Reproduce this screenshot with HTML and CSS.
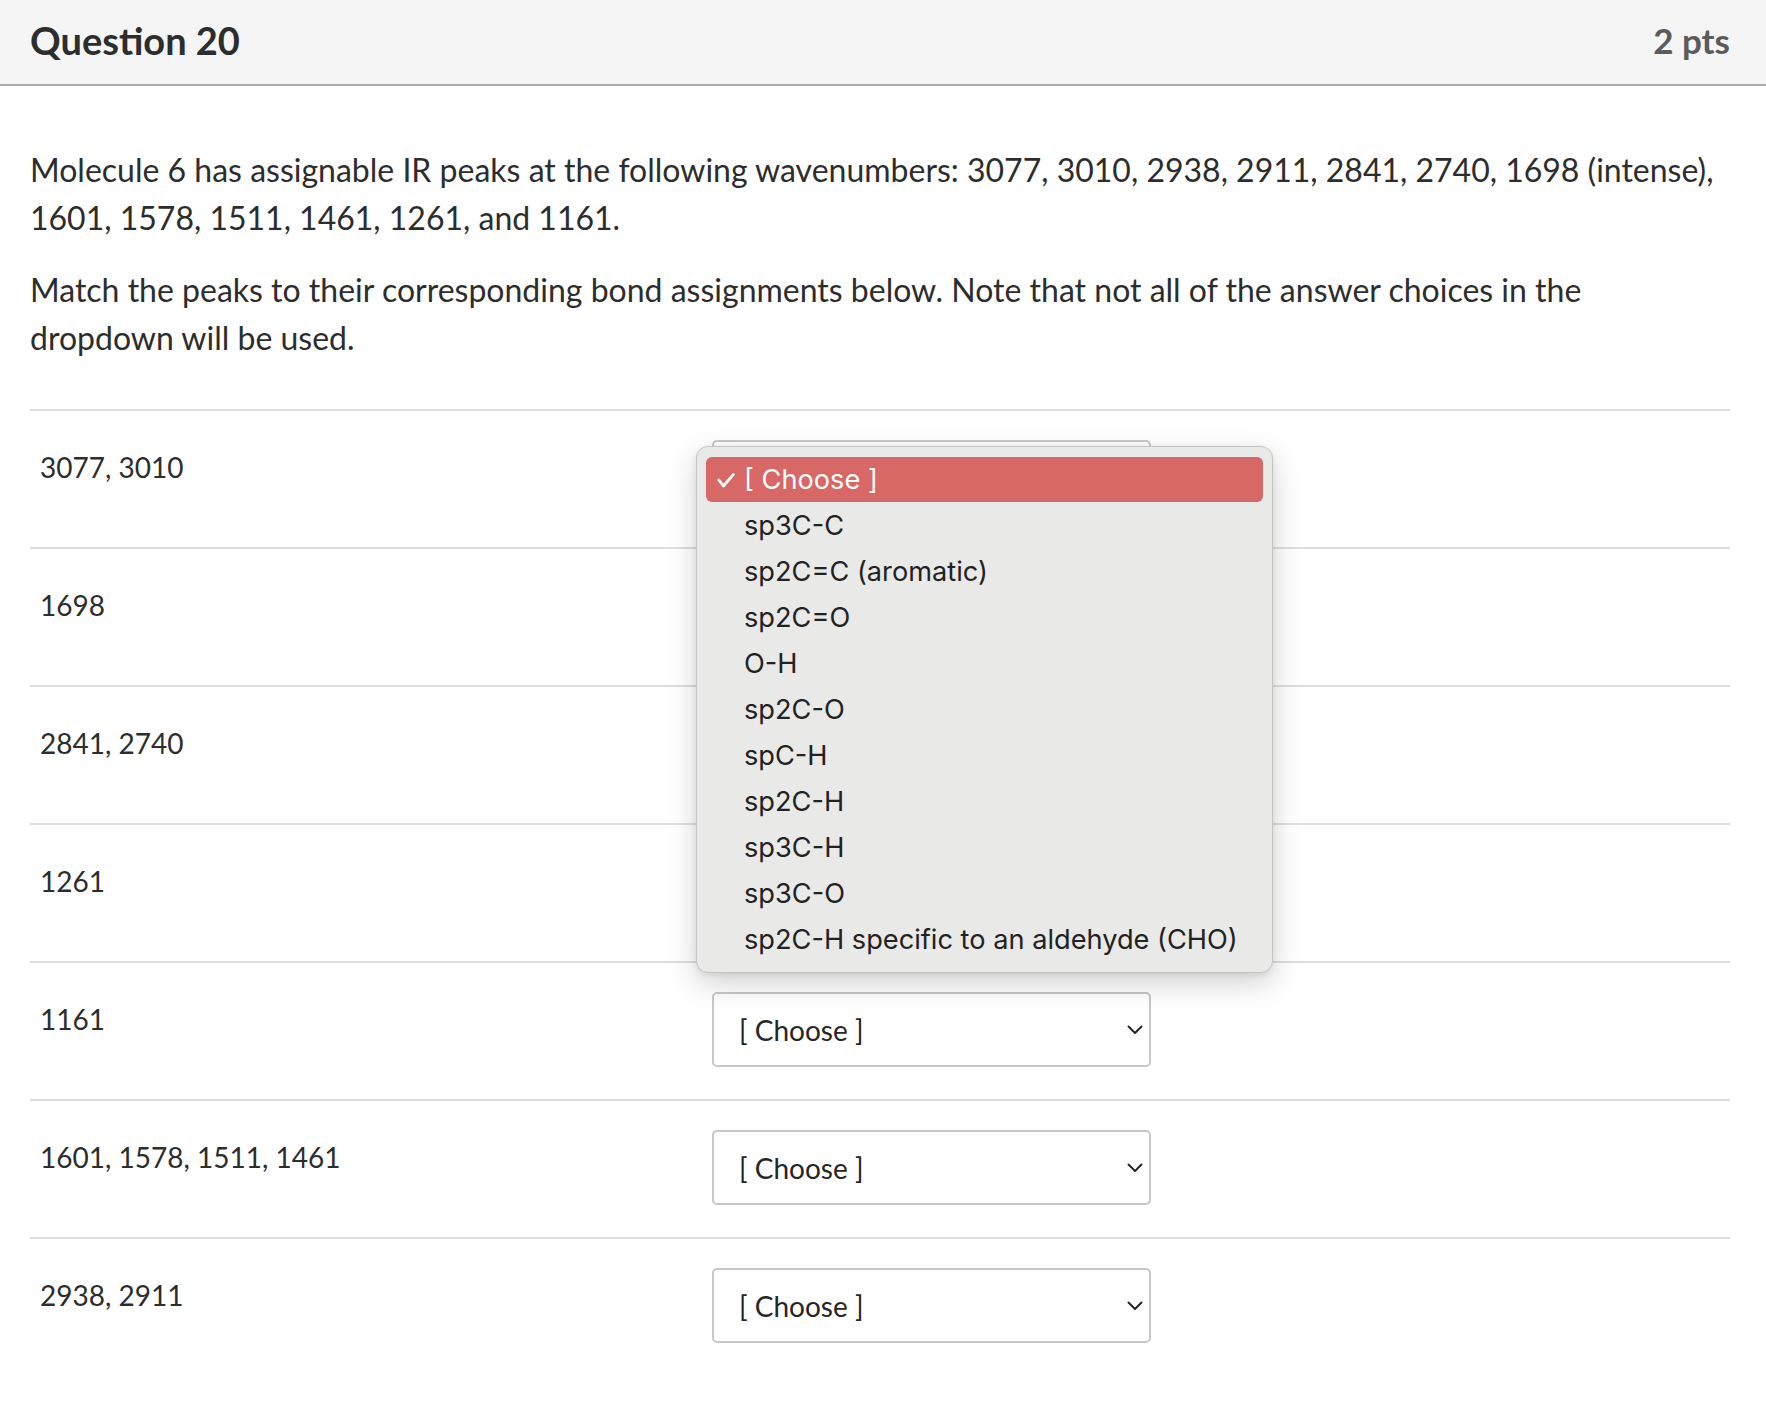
FILE: index.html
```html
<!DOCTYPE html>
<html lang="en">
<head>
<meta charset="utf-8">
<title>Question 20</title>
<link rel="stylesheet" href="styles.css">
</head>
<body>
<div class="question">
  <div class="q-header">
    <h2 class="q-title">Question 20</h2>
    <div class="q-points">2 pts</div>
  </div>
  <div class="q-body">
    <p class="q-text">Molecule 6 has assignable IR peaks at the following wavenumbers: 3077, 3010, 2938, 2911, 2841, 2740, 1698 (intense), 1601, 1578, 1511, 1461, 1261, and 1161.</p>
    <p class="q-text">Match the peaks to their corresponding bond assignments below. Note that not all of the answer choices in the dropdown will be used.</p>
    <div class="answers">
      <div class="answer-row">
        <div class="answer-label">3077, 3010</div>
        <div class="answer-select">
          <div class="select-wrap">
            <div class="select"><span>[ Choose ]</span><svg class="chev" viewBox="0 0 16 10" width="16" height="10"><path d="M1.5 1.5 L8 8 L14.5 1.5" fill="none" stroke="#222" stroke-width="1.9" stroke-linecap="round" stroke-linejoin="round"/></svg></div>
            <div class="popup">
              <div class="opt opt-selected"><svg class="check" viewBox="0 0 18 15" width="18" height="15"><path d="M1.8 7 L6.5 13 L16.3 1.6" fill="none" stroke="#fff" stroke-width="2.8" stroke-linecap="round" stroke-linejoin="round"/></svg>[ Choose ]</div>
              <div class="opt">sp3C-C</div>
              <div class="opt">sp2C=C (aromatic)</div>
              <div class="opt">sp2C=O</div>
              <div class="opt">O-H</div>
              <div class="opt">sp2C-O</div>
              <div class="opt">spC-H</div>
              <div class="opt">sp2C-H</div>
              <div class="opt">sp3C-H</div>
              <div class="opt">sp3C-O</div>
              <div class="opt">sp2C-H specific to an aldehyde (CHO)</div>
            </div>
          </div>
        </div>
      </div>
      <div class="answer-row">
        <div class="answer-label">1698</div>
        <div class="answer-select"><div class="select"><span>[ Choose ]</span><svg class="chev" viewBox="0 0 16 10" width="16" height="10"><path d="M1.5 1.5 L8 8 L14.5 1.5" fill="none" stroke="#222" stroke-width="1.9" stroke-linecap="round" stroke-linejoin="round"/></svg></div></div>
      </div>
      <div class="answer-row">
        <div class="answer-label">2841, 2740</div>
        <div class="answer-select"><div class="select"><span>[ Choose ]</span><svg class="chev" viewBox="0 0 16 10" width="16" height="10"><path d="M1.5 1.5 L8 8 L14.5 1.5" fill="none" stroke="#222" stroke-width="1.9" stroke-linecap="round" stroke-linejoin="round"/></svg></div></div>
      </div>
      <div class="answer-row">
        <div class="answer-label">1261</div>
        <div class="answer-select"><div class="select"><span>[ Choose ]</span><svg class="chev" viewBox="0 0 16 10" width="16" height="10"><path d="M1.5 1.5 L8 8 L14.5 1.5" fill="none" stroke="#222" stroke-width="1.9" stroke-linecap="round" stroke-linejoin="round"/></svg></div></div>
      </div>
      <div class="answer-row">
        <div class="answer-label">1161</div>
        <div class="answer-select"><div class="select"><span>[ Choose ]</span><svg class="chev" viewBox="0 0 16 10" width="16" height="10"><path d="M1.5 1.5 L8 8 L14.5 1.5" fill="none" stroke="#222" stroke-width="1.9" stroke-linecap="round" stroke-linejoin="round"/></svg></div></div>
      </div>
      <div class="answer-row">
        <div class="answer-label">1601, 1578, 1511, 1461</div>
        <div class="answer-select"><div class="select"><span>[ Choose ]</span><svg class="chev" viewBox="0 0 16 10" width="16" height="10"><path d="M1.5 1.5 L8 8 L14.5 1.5" fill="none" stroke="#222" stroke-width="1.9" stroke-linecap="round" stroke-linejoin="round"/></svg></div></div>
      </div>
      <div class="answer-row last">
        <div class="answer-label">2938, 2911</div>
        <div class="answer-select"><div class="select"><span>[ Choose ]</span><svg class="chev" viewBox="0 0 16 10" width="16" height="10"><path d="M1.5 1.5 L8 8 L14.5 1.5" fill="none" stroke="#222" stroke-width="1.9" stroke-linecap="round" stroke-linejoin="round"/></svg></div></div>
      </div>
    </div>
  </div>
</div>
</body>
</html>
```

FILE: styles.css
```css
html, body {
  margin: 0;
  padding: 0;
  background: #ffffff;
}
body {
  font-family: Lato, "Noto Sans", sans-serif;
  color: #2d2d2d;
  width: 1766px;
  height: 1410px;
  overflow: hidden;
}
.q-header {
  display: flex;
  align-items: center;
  justify-content: space-between;
  padding: 0 36px 0 30px;
  background: #f5f5f5;
  border-bottom: 2px solid #a9a9a9;
  box-sizing: border-box;
  height: 86px;
}
.q-title {
  margin: 0;
  font-size: 38px;
  font-weight: 700;
  color: #2d2d2d;
  padding-bottom: 4px;
}
.q-points {
  font-size: 35px;
  font-weight: 700;
  color: #5b5b5b;
  padding-bottom: 4px;
}
.q-body {
  padding: 60px 36px 0 30px;
}
.q-text {
  margin: 0 0 24px 0;
  font-size: 32px;
  line-height: 48px;
}
.answers {
  margin-top: 47px;
}
.answer-row {
  display: grid;
  grid-template-columns: 40% 60%;
  height: 138px;
  border-top: 2px solid #dedede;
  box-sizing: border-box;
}
.answer-label {
  padding: 36px 0 0 10px;
  font-size: 28px;
  line-height: 40px;
}
.answer-select {
  padding: 29px 0 0 2px;
}
.select-wrap {
  position: relative;
  width: 439px;
}
.select {
  display: flex;
  align-items: center;
  justify-content: space-between;
  width: 439px;
  height: 75px;
  box-sizing: border-box;
  padding: 0 6px 0 25px;
  border: 2px solid #c8c8c8;
  border-radius: 5px;
  background: #fff;
  font-size: 28px;
  color: #262626;
}
.chev {
  display: block;
}
.popup {
  position: absolute;
  left: -16px;
  top: 6px;
  width: 577px;
  box-sizing: border-box;
  padding: 10px 9px 9px 9px;
  background: #e9e9e7;
  border: 1px solid #c4c4c4;
  border-radius: 12px;
  box-shadow: 0 10px 30px rgba(0, 0, 0, 0.18), 0 2px 6px rgba(0, 0, 0, 0.08);
  font-family: Inter, "Liberation Sans", sans-serif;
  font-size: 27.2px;
  color: #222;
  z-index: 5;
}
.opt {
  height: 46px;
  line-height: 46px;
  padding-left: 38px;
  border-radius: 6px;
  position: relative;
  white-space: nowrap;
}
.opt-selected {
  background: #d86865;
  color: #ffffff;
  height: 45px;
  line-height: 45px;
  margin-bottom: 1px;
}
.check {
  position: absolute;
  left: 11px;
  top: 16px;
}
```
